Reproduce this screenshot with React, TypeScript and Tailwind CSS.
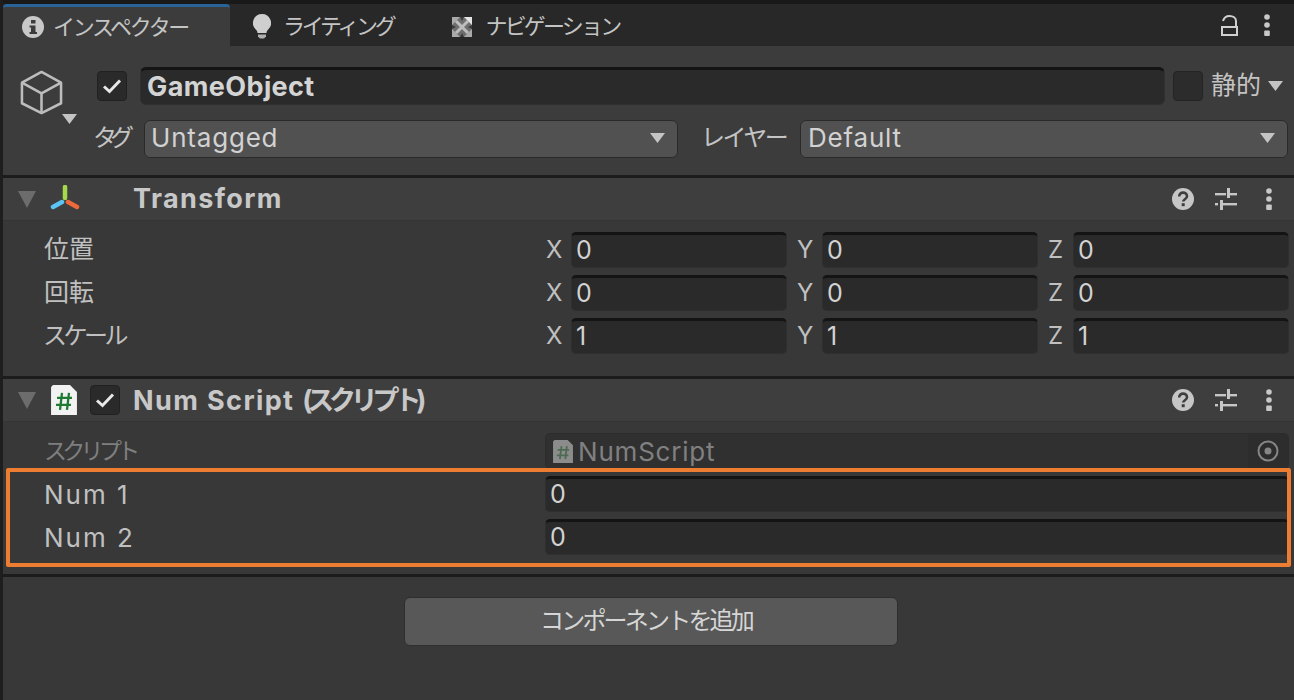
const Caret = ({ className = '' }: { className?: string }) => (
  <svg width="15" height="10" viewBox="0 0 15 10" className={`shrink-0 ${className}`}>
    <path d="M0 0h15L7.500 10z" fill="#c4c4c4" />
  </svg>
);

const Fold = () => (
  <svg width="18" height="18" viewBox="0 0 18 18" className="shrink-0">
    <path d="M0 1h18l-9 17z" fill="#6c6c6c" />
  </svg>
);

const Check = ({ className = '' }: { className?: string }) => (
  <div className={`w-[30px] h-[30px] shrink-0 rounded-[4px] bg-[#2a2a2a] border border-[#212121] flex items-center justify-center ${className}`}>
    <svg width="20" height="16" viewBox="0 0 20 16">
      <path d="M2 8.500l5.500 5L18 2.500" fill="none" stroke="#e8e8e8" strokeWidth="3" />
    </svg>
  </div>
);

const Dots = ({ className = '' }: { className?: string }) => (
  <svg width="8" height="24" viewBox="0 0 8 24" className={className}>
    <circle cx="4" cy="4" r="2.800" fill="#c8c8c8" />
    <circle cx="4" cy="12" r="2.800" fill="#c8c8c8" />
    <rect x="1.200" y="17.500" width="5.600" height="5.600" rx="1" fill="#c8c8c8" />
  </svg>
);

const Help = () => (
  <svg width="22" height="22" viewBox="0 0 22 22">
    <circle cx="11" cy="11" r="11" fill="#c6c6c6" />
    <path d="M7.200 8.400c0-5 7.800-5 7.800-.2 0 3-3.800 3-3.800 5.400" fill="none" stroke="#3e3e3e" strokeWidth="2.600" />
    <rect x="9.700" y="15.200" width="3" height="3" fill="#3e3e3e" />
  </svg>
);

const Sliders = () => (
  <svg width="22" height="22" viewBox="0 0 22 22" fill="#c6c6c6">
    <rect x="0" y="5" width="11" height="2.400" />
    <rect x="12" y="0" width="3" height="10" />
    <rect x="15" y="5" width="7" height="2.400" />
    <rect x="0" y="15" width="3" height="2.400" />
    <rect x="5" y="12" width="3" height="10" />
    <rect x="8" y="15" width="14" height="2.400" />
  </svg>
);

const ScriptIcon = ({ dim = false, size = 26 }: { dim?: boolean; size?: number }) => (
  <svg width={size} height={size * 1.15} viewBox="0 0 26 30" className="shrink-0">
    <path d="M2 0h17l7 7v23H0V2z" fill={dim ? '#8c8c8c' : '#f2f2f2'} />
    <path d="M11 8l-2 17M18 8l-2 17M6 13h15M5 20h15" stroke={dim ? '#4c6b52' : '#1f7a33'} strokeWidth="2.300" fill="none" />
  </svg>
);

const Field = ({ value, className = '' }: { value: string; className?: string }) => (
  <div className={`h-9 rounded-[5px] bg-[#2a2a2a] border border-[#2f2f2f] border-t-[3px] border-t-[#141414] pl-[4px] flex items-center text-[#d2d2d2] text-[25px] tracking-[0.5px] ${className}`}>
    {value}
  </div>
);

const Axis = ({ label, value }: { label: string; value: string }) => (
  <div className="flex-1 flex items-center">
    <span className="w-[26px] pl-[1px] text-[24px] text-[#c0c0c0] shrink-0">{label}</span>
    <Field value={value} className="flex-1" />
  </div>
);

const VectorRow = ({ label, v, kana = false }: { label: string; v: string; kana?: boolean }) => (
  <div className="flex items-center h-9">
    <span className={`w-[542px] shrink-0 text-[#c0c0c0] ${kana ? 'pl-[40px] text-[24px] tracking-[-3.500px]' : 'pl-[41px] text-[25px]'}`}>{label}</span>
    <div className="flex-1 flex gap-[9px] pr-[5px]">
      <Axis label="X" value={v} />
      <Axis label="Y" value={v} />
      <Axis label="Z" value={v} />
    </div>
  </div>
);

const HeaderActions = () => (
  <div className="ml-auto flex items-center gap-[21px] pr-[21px]">
    <Help />
    <Sliders />
    <Dots className="ml-[7px]" />
  </div>
);

export default function App() {
  return (
    <div
      className="w-[1294px] h-[700px] overflow-hidden bg-[#383838] border-l-[3px] border-l-[#1e1e1e] flex flex-col"
      style={{ fontFamily: 'Inter, "Noto Sans CJK JP", sans-serif' }}
    >
      <div className="h-[4px] bg-[#191919] shrink-0" />

      {/* tabs */}
      <div className="h-[42px] bg-[#282828] shrink-0 flex items-stretch text-[22px] text-[#c4c4c4]">
        <div className="w-[227px] bg-[#3c3c3c] border-t-[3px] border-t-[#2a6396] rounded-t-[4px] flex items-center pl-[19px] pt-[1px] gap-[9px] tracking-[-2.300px]">
          <svg width="22" height="22" viewBox="0 0 22 22" className="shrink-0">
            <circle cx="11" cy="11" r="11" fill="#c8c8c8" />
            <rect x="9" y="4" width="4.500" height="3.500" fill="#3c3c3c" />
            <path d="M7.500 9.500h6v6.500h1.500v2H7.500v-2H9V11.500H7.500z" fill="#3c3c3c" />
          </svg>
          インスペクター
        </div>
        <div className="flex items-center pl-[23px] pt-[3px] gap-[12px] tracking-[-3.300px]">
          <svg width="18" height="26" viewBox="0 0 18 26" className="shrink-0">
            <path d="M9 0a9 9 0 0 1 6 15.700c-1 1-1.500 2-1.500 3.300h-9c0-1.300-.5-2.300-1.500-3.300A9 9 0 0 1 9 0z" fill="#cfcfcf" />
            <path d="M5 20.500h8v2l-2 2H7l-2-2z" fill="#b0b0b0" />
          </svg>
          ライティング
        </div>
        <div className="flex items-center pl-[58px] pt-[3px] gap-[12px] tracking-[-2.800px]">
          <svg width="22" height="22" viewBox="0 0 22 22" className="shrink-0">
            <rect x="1" y="1" width="20" height="20" fill="#6e6e6e" />
            <path d="M5 5l12 12M17 5L5 17" stroke="#bdbdbd" strokeWidth="3" />
            <path d="M13 1h8v8z" fill="#e4e4e4" />
            <path d="M1 13v8h8zM1 1h8L1 9zM21 21h-8l8-8z" fill="#aaaaaa" />
            <path d="M9 1h4l-2 4zM9 21h4l-2-4zM1 9v4l4-2zM21 9v4l-4-2z" fill="#3a3a3a" />
          </svg>
          ナビゲーション
        </div>
        <div className="ml-auto flex items-center gap-[25px] pr-[23px]">
          <svg width="17" height="21" viewBox="0 0 17 21" fill="none" stroke="#d0d0d0" strokeWidth="2">
            <rect x="1" y="12" width="15" height="8" />
            <path d="M2 6C3 2.500 5 1 8.500 1S15 3 15 6v6" />
          </svg>
          <Dots />
        </div>
      </div>

      {/* object header */}
      <div className="h-[129px] bg-[#3c3c3c] shrink-0 flex pl-[17px] text-[#c4c4c4]">
        <div className="relative w-[77px] shrink-0 pt-[24px]">
          <svg width="43" height="45" viewBox="0 0 44 46" fill="none" stroke="#bdbdbd" strokeWidth="2.600" strokeLinejoin="round">
            <path d="M22 2l20 11v21L22 44 2 34V13z" />
            <path d="M2 13l20 11 20-11M22 24v20" />
          </svg>
          <Caret className="absolute left-[42px] top-[68px]" />
        </div>
        <div className="flex-1 min-w-0 flex flex-col pr-[6px]">
          <div className="flex items-center h-[38px] mt-[21px]">
            <Check />
            <div className="w-[1025px] ml-[13px] h-[38px] shrink-0 rounded-[6px] bg-[#2a2a2a] border border-[#303030] border-t-[3px] border-t-[#141414] pl-[6px] flex items-center text-[27px] font-bold text-[#d4d4d4] tracking-[0.4px]">
              GameObject
            </div>
            <div className="w-[30px] h-[30px] ml-[8px] rounded-[4px] bg-[#2c2c2c] border border-[#242424] shrink-0" />
            <span className="ml-[8px] text-[25px]">静的</span>
            <Caret className="ml-[7px]" />
          </div>
          <div className="flex items-center h-[38px] mt-[15px] text-[24px]">
            <span className="w-[51px] tracking-[-7px] shrink-0 -ml-[4px] pb-[2px]">タグ</span>
            <div className="w-[534px] h-[38px] shrink-0 rounded-[6px] bg-[#515151] border border-[#2a2a2a] pl-[6px] pr-[12px] pb-[3px] flex items-center justify-between text-[26px] text-[#d2d2d2] tracking-[0.8px]">
              Untagged
              <Caret />
            </div>
            <span className="w-[122px] pl-[23px] tracking-[-2.500px] shrink-0 pb-[2px]">レイヤー</span>
            <div className="flex-1 h-[38px] rounded-[6px] bg-[#515151] border border-[#2a2a2a] pl-[7px] pr-[12px] pb-[3px] flex items-center justify-between text-[26px] text-[#d2d2d2] tracking-[0.8px]">
              Default
              <Caret />
            </div>
          </div>
        </div>
      </div>

      {/* transform */}
      <div className="h-[3px] bg-[#1c1c1c] shrink-0" />
      <div className="h-[43px] bg-[#3e3e3e] border-b border-b-[#343434] shrink-0 flex items-center pl-[15px]">
        <Fold />
        <svg width="30" height="28" viewBox="0 0 30 28" className="ml-[14px] shrink-0">
          <path d="M15 2v11" stroke="#a4d94c" strokeWidth="4.500" strokeLinecap="round" />
          <path d="M12 17L3 22" stroke="#5cc4f4" strokeWidth="4.500" strokeLinecap="round" />
          <path d="M18 17l9 5" stroke="#f0693a" strokeWidth="4.500" strokeLinecap="round" />
        </svg>
        <span className="ml-[53px] text-[27px] font-bold text-[#c8c8c8] tracking-[1.400px]">Transform</span>
        <HeaderActions />
      </div>
      <div className="h-[155px] shrink-0 flex flex-col gap-[7px] pt-[11px]">
        <VectorRow label="位置" v="0" />
        <VectorRow label="回転" v="0" />
        <VectorRow label="スケール" v="1" kana />
      </div>

      {/* num script */}
      <div className="h-[3px] bg-[#1c1c1c] shrink-0" />
      <div className="h-[43px] bg-[#3e3e3e] border-b border-b-[#343434] shrink-0 flex items-center pl-[15px]">
        <Fold />
        <div className="ml-[15px]"><ScriptIcon /></div>
        <Check className="ml-[13px]" />
        <span className="ml-[13px] pt-[2px] text-[27px] font-bold text-[#c8c8c8] tracking-[1.400px]">
          Num Script <span className="tracking-[-5.200px]">(スクリプト)</span>
        </span>
        <HeaderActions />
      </div>
      <div className="relative h-[152px] shrink-0 flex flex-col gap-[7px] pt-[11px]">
        <div className="flex items-center h-9">
          <span className="w-[542px] pl-[41px] text-[23px] text-[#7f7f7f] tracking-[-4.700px] shrink-0">スクリプト</span>
          <div className="flex-1 mr-[5px] h-9 rounded-[5px] bg-[#303030] border border-[#2c2c2c] pl-[7px] flex items-center text-[26px] text-[#808080] tracking-[0.8px]">
            <ScriptIcon dim size={20} />
            <span className="ml-[5px]">NumScript</span>
            <div className="ml-auto w-10 h-full bg-[#2d2d2d] rounded-r-[5px] flex items-center justify-center">
              <svg width="22" height="22" viewBox="0 0 22 22">
                <circle cx="11" cy="11" r="9.500" fill="none" stroke="#868686" strokeWidth="2" />
                <circle cx="11" cy="11" r="3.500" fill="#868686" />
              </svg>
            </div>
          </div>
        </div>
        <div className="flex items-center h-9">
          <span className="w-[542px] pl-[41px] text-[26px] text-[#c0c0c0] tracking-[2px] shrink-0">Num 1</span>
          <Field value="0" className="flex-1 mr-[5px]" />
        </div>
        <div className="flex items-center h-9">
          <span className="w-[542px] pl-[41px] text-[26px] text-[#c0c0c0] tracking-[2px] shrink-0">Num 2</span>
          <Field value="0" className="flex-1 mr-[5px]" />
        </div>
        {/* annotation frame */}
        <div className="absolute left-[3px] top-[46px] w-[1285px] h-[99px] border-[4px] border-[#ed7d31] rounded-[2px]" />
      </div>

      {/* add component */}
      <div className="h-[3px] bg-[#1c1c1c] shrink-0" />
      <div className="flex justify-center pt-[20px] pl-[4px]">
        <div className="w-[494px] h-[49px] rounded-[6px] bg-[#585858] border border-[#2e2e2e] flex items-center justify-center text-[24px] text-[#d6d6d6] tracking-[-2.800px] pb-[2px] pr-[9px]">
          コンポーネントを追加
        </div>
      </div>
    </div>
  );
}
